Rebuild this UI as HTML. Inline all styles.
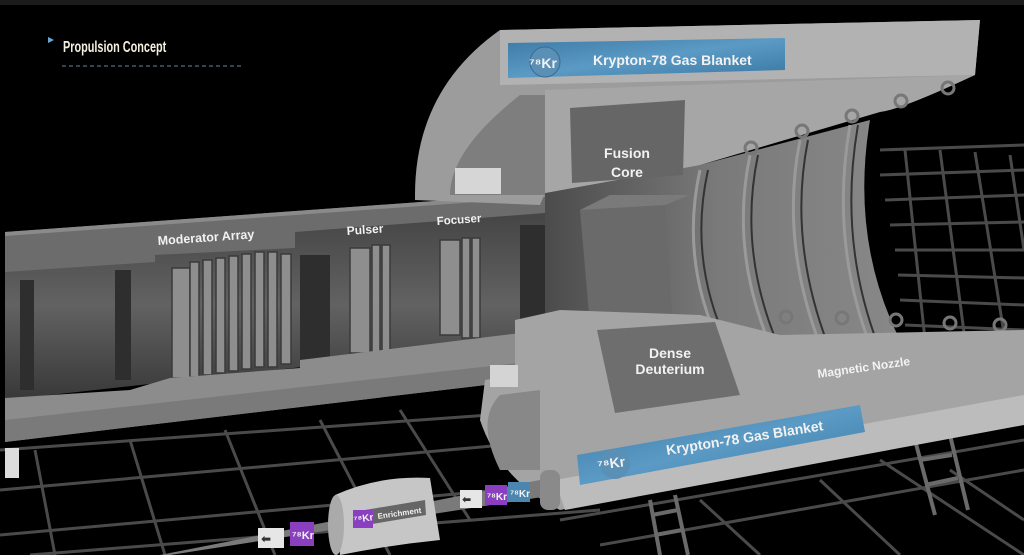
<!DOCTYPE html>
<html><head><meta charset="utf-8"><style>
html,body{margin:0;padding:0;background:#000;width:1024px;height:555px;overflow:hidden}
svg{display:block}
text{font-family:"Liberation Sans","DejaVu Sans",sans-serif;font-weight:bold;fill:#f2f2f2}
</style></head><body>
<svg width="1024" height="555" viewBox="0 0 1024 555" xmlns="http://www.w3.org/2000/svg">
<defs>
<linearGradient id="tube" x1="0" y1="0" x2="0" y2="1"><stop offset="0" stop-color="#444"/><stop offset="0.5" stop-color="#626262"/><stop offset="1" stop-color="#383838"/></linearGradient>
<linearGradient id="noz" x1="0" y1="0" x2="1" y2="0"><stop offset="0" stop-color="#4a4a4a"/><stop offset="0.5" stop-color="#7a7a7a"/><stop offset="1" stop-color="#888"/></linearGradient>
<linearGradient id="blue" x1="0" y1="0" x2="1" y2="1"><stop offset="0" stop-color="#3d7aa6"/><stop offset="0.5" stop-color="#5a9ac4"/><stop offset="1" stop-color="#3a78a3"/></linearGradient>
</defs>
<rect width="1024" height="555" fill="#000"/>
<rect width="1024" height="5" fill="#1c1c1c"/>
<!-- grid -->
<g stroke="#4a4a4a" stroke-width="3" fill="none">
<path d="M0 450 L560 410 M0 490 L560 440 M0 535 L500 490 M30 555 L600 510"/>
<path d="M35 450 L55 555 M130 440 L165 555 M225 430 L275 555 M320 420 L390 555 M400 410 L470 520"/>
<path d="M880 150 L1024 145 M880 175 L1024 170 M885 200 L1024 195 M890 225 L1024 222 M895 250 L1024 250 M898 275 L1024 278 M900 300 L1024 305 M905 325 L1024 330"/>
<path d="M905 150 L925 340 M940 150 L965 340 M975 152 L1005 340 M1010 155 L1024 250"/>
<path d="M560 520 L1024 440 M600 545 L1024 470 M880 460 L1024 555 M700 500 L760 555 M820 480 L900 555 M950 470 L1024 520"/>
</g>
<!-- ladders -->
<g stroke="#6a6a6a" stroke-width="4" fill="none">
<path d="M650 500 L660 555 M675 495 L688 555 M652 515 L678 510 M655 535 L682 530"/>
<path d="M915 440 L935 515 M950 435 L968 510 M920 460 L952 455 M925 485 L958 478"/>
</g>
<!-- nozzle interior -->
<path d="M540 190 L700 165 L870 120 Q850 240 900 340 L700 345 L540 330 Z" fill="url(#noz)"/>
<g stroke="#9a9a9a" stroke-width="3" fill="none">
<path d="M700 170 Q680 260 720 345"/><path d="M750 155 Q730 250 770 345"/><path d="M800 140 Q780 240 820 345"/><path d="M850 125 Q830 240 870 345"/>
</g>
<g stroke="#333" stroke-width="2" fill="none">
<path d="M708 170 Q688 260 728 345"/><path d="M758 155 Q738 250 778 345"/><path d="M808 140 Q788 240 828 345"/><path d="M858 125 Q838 240 878 345"/>
</g>
<!-- dense deuterium cube -->
<path d="M580 210 L665 205 L672 315 L590 325 Z" fill="#6a6a6a"/>
<path d="M580 210 L610 195 L690 195 L665 205 Z" fill="#7a7a7a"/>
<!-- left tube interior -->
<path d="M5 250 L545 210 L545 340 L5 400 Z" fill="url(#tube)"/>
<g fill="#2e2e2e"><rect x="20" y="280" width="14" height="110"/><rect x="115" y="270" width="16" height="110"/><rect x="300" y="255" width="30" height="110"/><rect x="520" y="225" width="25" height="110"/></g>
<!-- moderator plates -->
<g fill="#8e8e8e" stroke="#3a3a3a" stroke-width="1.5">
<rect x="172" y="268" width="18" height="110"/><rect x="190" y="262" width="9" height="115"/><rect x="203" y="260" width="9" height="115"/><rect x="216" y="258" width="9" height="115"/><rect x="229" y="256" width="9" height="115"/><rect x="242" y="254" width="9" height="115"/><rect x="255" y="252" width="9" height="115"/><rect x="268" y="252" width="9" height="115"/><rect x="281" y="254" width="10" height="110"/>
<rect x="350" y="248" width="20" height="105"/><rect x="372" y="245" width="8" height="110"/><rect x="382" y="245" width="8" height="110"/>
<rect x="440" y="240" width="20" height="95"/><rect x="462" y="238" width="8" height="100"/><rect x="472" y="238" width="8" height="100"/>
</g>
<!-- left top bar -->
<path d="M5 232 L545 193 L545 213 L480 218 L295 232 L295 248 L155 255 L155 262 L5 272 Z" fill="#6c6c6c"/>
<path d="M5 232 L545 193 L545 197 L5 236 Z" fill="#8a8a8a"/>
<!-- left bottom bar -->
<path d="M5 398 L130 390 L170 378 L300 368 L300 360 L545 330 L545 378 L5 442 Z" fill="#8c8c8c"/>
<path d="M5 420 L545 360 L545 378 L5 442 Z" fill="#7a7a7a"/>
<rect x="5" y="448" width="14" height="30" fill="#ddd"/>
<!-- upper housing -->
<path d="M415 195 Q415 90 500 30 L980 20 L975 75 Q910 100 880 110 L700 165 L545 193 L540 205 L415 200 Z" fill="#9c9c9c"/>
<path d="M500 30 L980 20 L975 75 L500 85 Z" fill="#b2b2b2"/>
<path d="M450 195 Q450 150 520 95 L545 95 L545 195 Z" fill="#7e7e7e"/>
<rect x="455" y="168" width="46" height="26" fill="#d6d6d6"/>
<path d="M545 90 L975 75 Q900 110 880 112 L700 165 L545 193 Z" fill="#a6a6a6"/>
<!-- top label -->
<path d="M508 43 L785 38 L785 70 L508 78 Z" fill="url(#blue)"/>
<circle cx="545" cy="62" r="15" fill="#5a8fb6" stroke="#3a6b92" stroke-width="1"/>
<text x="529" y="68" font-size="14">⁷⁸Kr</text>
<text x="593" y="65" font-size="14">Krypton-78 Gas Blanket</text>
<!-- fusion core -->
<path d="M570 108 L685 100 L683 175 L572 183 Z" fill="#666"/>
<text x="627" y="158" font-size="14" text-anchor="middle">Fusion</text>
<text x="627" y="177" font-size="14" text-anchor="middle">Core</text>
<!-- rings -->
<g fill="none" stroke="#777" stroke-width="3"><circle cx="751" cy="148" r="6"/><circle cx="802" cy="131" r="6"/><circle cx="852" cy="116" r="6"/><circle cx="901" cy="101" r="6"/><circle cx="948" cy="88" r="6"/>
<circle cx="786" cy="317" r="6"/><circle cx="842" cy="318" r="6"/><circle cx="896" cy="320" r="6"/><circle cx="950" cy="323" r="6"/><circle cx="1000" cy="325" r="6"/></g>
<!-- lower housing -->
<path d="M515 320 L560 310 L700 315 L780 335 L1024 330 L1024 420 L560 510 Q500 480 480 420 L485 380 L515 375 Z" fill="#a4a4a4"/>
<path d="M555 480 L1024 395 L1024 425 L565 510 Z" fill="#bcbcbc"/>
<path d="M500 395 Q475 420 500 470 L540 470 L540 390 Z" fill="#888"/>
<rect x="490" y="365" width="28" height="22" fill="#d4d4d4"/>
<path d="M597 330 L715 322 L740 395 L615 413 Z" fill="#6e6e6e"/>
<text x="670" y="358" font-size="14" text-anchor="middle">Dense</text>
<text x="670" y="374" font-size="14" text-anchor="middle">Deuterium</text>
<text x="818" y="378" font-size="12" transform="rotate(-8 818 378)">Magnetic Nozzle</text>
<!-- bottom label -->
<path d="M577 455 L860 405 L865 432 L580 485 Z" fill="url(#blue)"/>
<circle cx="615" cy="464" r="15" fill="#5a8fb6"/>
<text x="598" y="470" font-size="14" transform="rotate(-8 598 470)">⁷⁸Kr</text>
<text x="667" y="455" font-size="14" transform="rotate(-9 667 455)">Krypton-78 Gas Blanket</text>
<!-- pipe -->
<path d="M160 555 L550 478 L555 495 L170 555 Z" fill="#7a7a7a"/>
<rect x="540" y="470" width="20" height="40" rx="8" fill="#8a8a8a"/>
<rect x="258" y="528" width="26" height="20" fill="#e6e6e6"/><text x="261" y="543" font-size="12" style="fill:#333">⬅</text>
<rect x="290" y="522" width="24" height="24" fill="#8a3fc0"/><text x="292" y="539" font-size="11">⁷⁸Kr</text>
<rect x="460" y="490" width="22" height="18" fill="#e6e6e6"/><text x="462" y="503" font-size="11" style="fill:#333">⬅</text>
<rect x="485" y="485" width="22" height="20" fill="#8a3fc0"/><text x="487" y="500" font-size="10">⁷⁸Kr</text>
<rect x="508" y="482" width="22" height="20" fill="#4a86b0"/><text x="510" y="497" font-size="10">⁷⁸Kr</text>
<!-- enrichment cylinder -->
<path d="M335 495 Q380 475 430 478 L440 540 Q390 545 340 555 Z" fill="#c6c6c6"/>
<ellipse cx="336" cy="525" rx="8" ry="30" fill="#aaa"/>
<path d="M353 512 L425 500 L426 515 L354 527 Z" fill="#666"/>
<rect x="353" y="510" width="20" height="18" fill="#8a3fc0"/>
<text x="354" y="523" font-size="10" transform="rotate(-8 354 523)">⁷⁸Kr</text>
<text x="378" y="519" font-size="8" transform="rotate(-8 378 519)">Enrichment</text>
<!-- left tube labels -->
<text x="158" y="245" font-size="12.5" transform="rotate(-4 158 245)">Moderator Array</text>
<text x="347" y="235" font-size="12" transform="rotate(-4 347 235)">Pulser</text>
<text x="437" y="225" font-size="11.5" transform="rotate(-4 437 225)">Focuser</text>
<!-- title -->
<path d="M48 37 L54 40 L48 43 Z" fill="#6aa6d4"/>
<text x="0" y="0" font-size="16" style="fill:#f4f0e0" transform="translate(63 52) scale(0.68 1)">Propulsion Concept</text>
<line x1="62" y1="66" x2="242" y2="66" stroke="#5f8aa6" stroke-width="1" stroke-dasharray="4 3"/>
</svg>
</body></html>
